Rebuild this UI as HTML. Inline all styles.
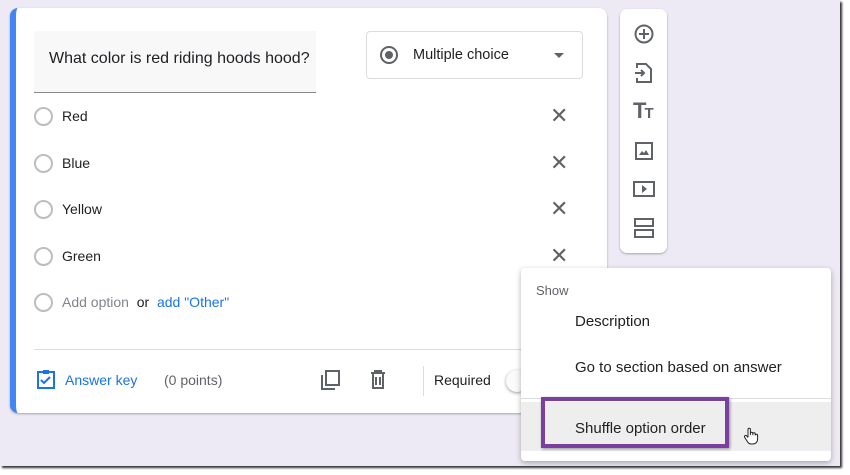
<!DOCTYPE html>
<html><head><style>
*{box-sizing:border-box;margin:0;padding:0}
body{width:850px;height:475px;background:#fff;font-family:"Liberation Sans",sans-serif;position:relative;overflow:hidden}
.bg{position:absolute;left:0;top:0;width:840px;height:466px;background:#edeaf5;box-shadow:2px 2px 2px #333}
.card{position:absolute;left:10px;top:8px;width:597px;height:405px;background:#fff;border-radius:8px;border-left:6px solid #4285f4;box-shadow:0 1px 2px rgba(0,0,0,.3)}
.q{position:absolute;left:18px;top:23px;width:282px;height:62px;background:#f8f8f9;border-bottom:1px solid #888;font-size:16px;color:#202124;padding:19px 0 0 15px}
.type{position:absolute;left:350px;top:23px;width:217px;height:48px;border:1px solid #dadce0;border-radius:4px;font-size:14.5px;color:#202124}
.opt{position:absolute;left:18px;font-size:14px;color:#202124}
.rad{position:absolute;left:0;top:0;width:19px;height:19px;border:2px solid #bdbdbd;border-radius:50%}
.opt span{position:absolute;left:28px;top:1px;white-space:nowrap}
.x{position:absolute;left:534px;font-size:22px;color:#5f6368}
.tb{position:absolute;left:620px;top:9px;width:47px;height:244px;background:#fff;border-radius:7px;box-shadow:0 1px 2px rgba(0,0,0,.3)}
.menu{position:absolute;left:521px;top:268px;width:310px;height:193px;background:#fff;border-radius:4px;box-shadow:0 2px 6px rgba(0,0,0,.3)}
.mi{position:absolute;left:54px;font-size:15px;color:#202124}
</style></head><body>
<div class="bg"></div>
<div class="card">
 <div class="q">What color is red riding hoods hood?</div>
 <div class="type">
  <div style="position:absolute;left:13px;top:14px;width:18px;height:18px;border:2px solid #5f6368;border-radius:50%"><div style="position:absolute;left:3px;top:3px;width:8px;height:8px;background:#5f6368;border-radius:50%"></div></div>
  <span style="position:absolute;left:46px;top:15px">Multiple choice</span>
  <div style="position:absolute;left:187px;top:21px;border-left:5px solid transparent;border-right:5px solid transparent;border-top:5px solid #5f6368"></div>
 </div>
 <div class="opt" style="top:99px"><div class="rad"></div><span>Red</span></div>
 <div class="opt" style="top:146px"><div class="rad"></div><span>Blue</span></div>
 <div class="opt" style="top:192px"><div class="rad"></div><span>Yellow</span></div>
 <div class="opt" style="top:239px"><div class="rad"></div><span>Green</span></div>
 <div class="opt" style="top:285px"><div class="rad"></div><span><span style="position:static;color:#80868b">Add option</span> &nbsp;or &nbsp;<span style="position:static;color:#1a73e8">add "Other"</span></span></div>
 <div class="x" style="top:95px">✕</div><div class="x" style="top:142px">✕</div><div class="x" style="top:188px">✕</div><div class="x" style="top:235px">✕</div>
 <div style="position:absolute;left:18px;top:341px;width:580px;border-top:1px solid #dadce0"></div>
 <svg style="position:absolute;left:20px;top:360px" width="20" height="22" viewBox="0 0 20 22"><rect x="2" y="4" width="16" height="16" fill="none" stroke="#1a73e8" stroke-width="2"/><rect x="7" y="2" width="6" height="4" fill="#1a73e8"/><path d="M5 12l3 3 6-6" fill="none" stroke="#1a73e8" stroke-width="2"/></svg>
 <span style="position:absolute;left:49px;top:364px;font-size:14px;color:#1a73e8">Answer key</span>
 <span style="position:absolute;left:148px;top:364px;font-size:14px;color:#5f6368">(0 points)</span>
 <svg style="position:absolute;left:305px;top:362px" width="20" height="20" viewBox="0 0 20 20"><rect x="5" y="1" width="13" height="14" fill="none" stroke="#5f6368" stroke-width="2"/><path d="M1 5v14h13" fill="none" stroke="#5f6368" stroke-width="2"/></svg>
 <svg style="position:absolute;left:354px;top:362px" width="16" height="19" viewBox="0 0 16 19"><path d="M1 3h14M5 3V1h6v2M3 4v14h10V4M6 7v8M10 7v8" fill="none" stroke="#5f6368" stroke-width="2"/></svg>
 <div style="position:absolute;left:407px;top:358px;height:30px;border-left:1px solid #dadce0"></div>
 <span style="position:absolute;left:418px;top:364px;font-size:14px;color:#202124">Required</span>
 <div style="position:absolute;left:490px;top:362px;width:22px;height:22px;border-radius:50%;background:#fafafa;box-shadow:0 1px 3px rgba(0,0,0,.4)"></div>
</div>
<div class="tb">
 <svg style="position:absolute;left:13px;top:14px" width="22" height="22" viewBox="0 0 22 22"><circle cx="11" cy="11" r="8.5" fill="none" stroke="#5f6368" stroke-width="2"/><path d="M11 6v10M6 11h10" stroke="#5f6368" stroke-width="2"/></svg>
 <svg style="position:absolute;left:14px;top:53px" width="20" height="22" viewBox="0 0 20 22"><path d="M3 6V2h9l5 5v13H3v-4" fill="none" stroke="#5f6368" stroke-width="2"/><path d="M1 11h9M7 8l3 3-3 3" fill="none" stroke="#5f6368" stroke-width="2"/></svg>
 <span style="position:absolute;left:13px;top:89px;font-size:22px;font-weight:bold;color:#5f6368;letter-spacing:-2px">T<span style="font-size:15px">T</span></span>
 <svg style="position:absolute;left:14px;top:132px" width="20" height="20" viewBox="0 0 20 20"><rect x="2" y="2" width="16" height="16" fill="none" stroke="#5f6368" stroke-width="2"/><path d="M5 14l3-4 2 2 2-3 3 5z" fill="#5f6368"/></svg>
 <svg style="position:absolute;left:12px;top:171px" width="24" height="18" viewBox="0 0 24 18"><rect x="2" y="2" width="20" height="14" fill="none" stroke="#5f6368" stroke-width="2"/><path d="M10 5v8l5-4z" fill="#5f6368"/></svg>
 <svg style="position:absolute;left:13px;top:209px" width="22" height="20" viewBox="0 0 22 20"><rect x="2" y="1" width="18" height="7" fill="none" stroke="#5f6368" stroke-width="2"/><rect x="2" y="12" width="18" height="7" fill="none" stroke="#5f6368" stroke-width="2"/></svg>
</div>
<div class="menu">
 <span style="position:absolute;left:15px;top:15px;font-size:13px;color:#5f6368">Show</span>
 <span class="mi" style="top:45px">Description</span>
 <span class="mi" style="top:91px">Go to section based on answer</span>
 <div style="position:absolute;left:0;top:130px;width:310px;border-top:1px solid #dadce0"></div>
 <div style="position:absolute;left:0;top:134px;width:310px;height:49px;background:#eee"></div>
 <div style="position:absolute;left:20px;top:129px;width:188px;height:51px;border:4px solid #7b3fa0;box-shadow:1px 1px 3px rgba(0,0,0,.4)"></div>
 <span class="mi" style="top:152px">Shuffle option order</span>
 <svg style="position:absolute;left:222px;top:159px" width="16" height="18" viewBox="0 0 16 18"><path d="M5 10V2.5a1.2 1.2 0 0 1 2.4 0V8M7.4 8V6.5a1.2 1.2 0 0 1 2.4 0V8M9.8 8V7a1.2 1.2 0 0 1 2.4 0V8.5M12.2 8.5a1.2 1.2 0 0 1 2.4 0V12c0 3-2 5-5 5H8c-2 0-3-1-4-3L1.5 10a1.2 1.2 0 0 1 2-1.2L5 10.5" fill="#fff" stroke="#222" stroke-width="1"/></svg>
</div>
</body></html>
